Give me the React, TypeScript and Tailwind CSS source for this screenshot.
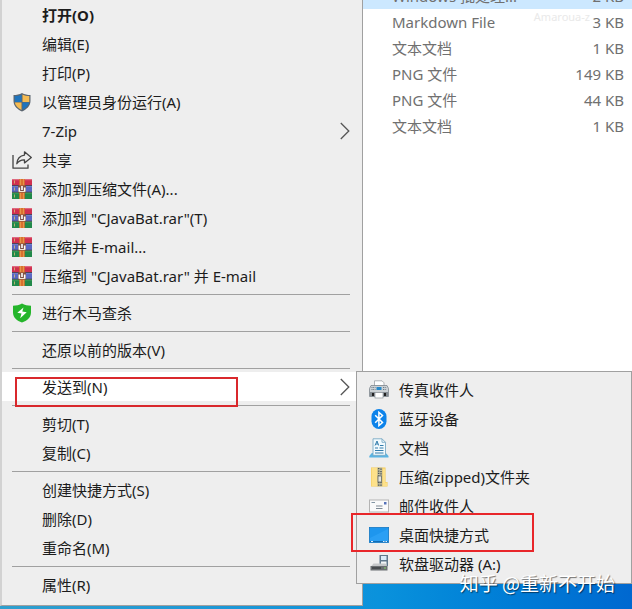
import type { ReactNode } from "react"

type Item = { label: string; icon?: ReactNode; bold?: boolean; arrow?: boolean; submenu?: boolean }

/* 图标 */
function ShieldIcon() {
  return (
    <svg viewBox="0 0 20 20" className="w-5 h-5">
      <path d="M10 1C7.500 2.500 4.500 3 1.500 3v6c0 5 4 8.500 8.500 10.500C14.500 17.500 18.500 14 18.500 9V3C15.500 3 12.500 2.500 10 1z" fill="#5c6670" />
      <path d="M9.500 2.500C7.500 3.600 5 4 2.700 4.100V10h6.800z" fill="#1f74bd" />
      <path d="M10.500 2.500c2 1.100 4.500 1.500 6.800 1.600V10h-6.800z" fill="#f5bb52" />
      <path d="M2.800 10.600h6.700v7.300C6 16.200 3.300 13.800 2.800 10.600z" fill="#f5bb52" />
      <path d="M17.200 10.600h-6.700v7.300c3.500-1.700 6.200-4.100 6.700-7.300z" fill="#1f74bd" />
    </svg>
  )
}

function ShareIcon() {
  return (
    <svg viewBox="0 0 20 20" className="w-5 h-5" fill="none" stroke="#444" strokeWidth="1.300" strokeLinejoin="round">
      <path d="M1 5v13.200h15V14.500" />
      <path d="M12.500 1.800l6.800 5.600-6.800 5.500V9.800c-3.500-.2-5.800 1.200-7.700 3.900.4-4.800 3-8 7.700-8.600z" />
    </svg>
  )
}

function RarIcon() {
  return (
    <svg viewBox="0 0 20 20" className="w-5 h-5">
      <rect y="0" width="20" height="7" fill="#d0304f" />
      <rect y="0" width="20" height="1.200" fill="#df6a80" />
      <rect y="6.600" width="20" height="6.800" fill="#5a67c2" />
      <rect y="6.600" width="20" height="1" fill="#7e8bd5" />
      <rect y="13.400" width="20" height="6.600" fill="#21894a" />
      <rect y="13.400" width="20" height="1" fill="#51ad61" />
      <path d="M0 6.500h20M0 13.200h20" stroke="#403c45" strokeWidth=".8" />
      <path d="M2.500 1.500v3M2.500 8.500v3M2.500 15.500v3" stroke="#d8bf76" strokeWidth=".8" />
      <rect x="7.200" width="5.600" height="20" fill="#d9702f" />
      <path d="M8.500 0v6M11.500 0v6M8.500 14v6M11.500 14v6" stroke="#e8a04f" strokeWidth=".8" />
      <rect x="6" y="6.500" width="8" height="7" fill="#7d5146" />
      <path d="M7.300 12.800V8.500M12.700 12.800V8.500M10 7v4" stroke="#fff" strokeWidth="1.600" />
      <path d="M7 12.500h6" stroke="#f0e6d8" />
    </svg>
  )
}

function GuardIcon() {
  return (
    <svg viewBox="0 0 20 20" className="w-5 h-5">
      <path d="M10 .5C7.500 2 4 2.700 1 2.800v6.700c0 5 4 8.500 9 10 5-1.500 9-5 9-10V2.800C16 2.700 12.500 2 10 .5z" fill="#25b52b" />
      <path d="M11.500 4.500L5.300 9.800l4.200.8-1.300 4.700 6.500-6-4.400-.8z" fill="#fff" />
    </svg>
  )
}

function FaxIcon() {
  return (
    <svg viewBox="0 0 20 20" className="w-5 h-5">
      <path d="M5.500 6V.8h7.500l2 2V6z" fill="#fff" stroke="#9ba0a4" strokeWidth=".8" />
      <path d="M2 5.500h16l1.500 3v8H.5v-8z" fill="#ccd2d6" stroke="#7f878e" strokeWidth=".8" />
      <path d="M1 12h18v4.500H1z" fill="#858c92" />
      <rect x="7.500" y="7" width="5" height="3" fill="#2889c9" />
      <path d="M2.500 7.500h4M2.500 9.500h4M14 7.500h3.500M14 9.500h3.500" stroke="#6d7b86" strokeDasharray="1 .7" />
      <rect x="6" y="12.500" width="8" height="5.500" fill="#fff" stroke="#8d959b" strokeWidth=".7" />
      <path d="M4 13v3M16 13v3" stroke="#222" strokeWidth="2" />
    </svg>
  )
}

function BluetoothIcon() {
  return (
    <svg viewBox="0 0 20 20" className="w-5 h-5">
      <rect x="2.500" width="15" height="20" rx="7.500" fill="#0d83ea" />
      <path d="M6.200 6.300l7.300 7.200-3.600 3.200V3.300l3.600 3.200-7.300 7.200" fill="none" stroke="#fff" strokeWidth="1.500" />
    </svg>
  )
}

function DocumentIcon() {
  return (
    <svg viewBox="0 0 20 20" className="w-5 h-5">
      <path d="M.3 18l2.500-3h14l2.700 3v1.500H.3z" fill="#5bb4e2" />
      <path d="M4 .8h9l3.500 3.500v13H4z" fill="#f2fafe" stroke="#7baac5" strokeWidth=".9" />
      <path d="M13 .8v3.500h3.500" fill="none" stroke="#7baac5" strokeWidth=".9" />
      <path d="M6 7.500l2-4.500 1.700 4.500M7 6h2" fill="none" stroke="#327cac" />
      <path d="M11 7.500h3.500M6 10h3M10.500 10h4M6 12.500h8.500M6 15h8.500" stroke="#327cac" strokeWidth="1.100" />
    </svg>
  )
}

function ZipIcon() {
  return (
    <svg viewBox="0 0 20 20" className="w-5 h-5">
      <path d="M2 .5h14.500V15h2v4.500H2z" fill="#f3c955" />
      <path d="M2.500 1h5.500v18H2.500zM13.500 1.500h2.500V15.500h2V19h-4.500z" fill="#fde18a" />
      <rect x="8.300" y=".5" width="5" height="19" fill="#c5c3a1" />
      <path d="M9.700 1v8M12 1.500v8M9.700 15v4M12 15v4" stroke="#50565a" strokeWidth="1.500" strokeDasharray="1.300 1.100" />
      <rect x="9" y="9" width="3.500" height="6" fill="#e4e4dc" stroke="#656b68" strokeWidth=".8" />
    </svg>
  )
}

function MailIcon() {
  return (
    <svg viewBox="0 0 20 20" className="w-5 h-5">
      <rect x=".5" y="4" width="19" height="12" fill="#fafafa" stroke="#b4b4b4" />
      <path d="M2.500 6.500h3.500" stroke="#8395a4" />
      <rect x="15" y="6" width="2.500" height="2.500" fill="#5672b9" />
      <path d="M7 10h6.500M7 12.500h6.500" stroke="#7e8994" />
    </svg>
  )
}

function DesktopIcon() {
  return (
    <svg viewBox="0 0 20 20" className="w-5 h-5">
      <rect x=".4" y="2.500" width="19.200" height="15" fill="#1e96ee" stroke="#1678c2" strokeWidth=".8" />
      <path d="M1 13L19 4v12H1z" fill="#2a9ff4" />
      <path d="M1 16.500h18" stroke="#116db5" />
      <path d="M2 16.500h2M14 16.500h1.500M16.500 16.500H18" stroke="#d9efff" />
    </svg>
  )
}

function FloppyIcon() {
  return (
    <svg viewBox="0 0 20 20" className="w-5 h-5">
      <path d="M10.500 1H19v11h-8.500z" fill="#60788c" />
      <path d="M12 2h5.500v4H12z" fill="#d8ebf8" />
      <path d="M12 7.500h5.500V11H12z" fill="#f1f5f7" />
      <path d="M4.500 9.500h12l2 3H2z" fill="#c4c6c8" />
      <path d="M1.500 12h17v4.500h-17z" fill="#6b6f72" />
      <path d="M3 14h9" stroke="#34383b" strokeWidth="1.300" />
      <rect x="15" y="13.500" width="2" height="1" fill="#86d56b" />
    </svg>
  )
}

const groups: Item[][] = [
  [
    { label: "打开(O)", bold: true },
    { label: "编辑(E)" },
    { label: "打印(P)" },
    { label: "以管理员身份运行(A)", icon: <ShieldIcon /> },
    { label: "7-Zip", arrow: true },
    { label: "共享", icon: <ShareIcon /> },
    { label: "添加到压缩文件(A)...", icon: <RarIcon /> },
    { label: '添加到 "CJavaBat.rar"(T)', icon: <RarIcon /> },
    { label: "压缩并 E-mail...", icon: <RarIcon /> },
    { label: '压缩到 "CJavaBat.rar" 并 E-mail', icon: <RarIcon /> },
  ],
  [{ label: "进行木马查杀", icon: <GuardIcon /> }],
  [{ label: "还原以前的版本(V)" }],
  [{ label: "发送到(N)", arrow: true, submenu: true }],
  [{ label: "剪切(T)" }, { label: "复制(C)" }],
  [{ label: "创建快捷方式(S)" }, { label: "删除(D)" }, { label: "重命名(M)" }],
  [{ label: "属性(R)" }],
]

const sendTo = [
  { label: "传真收件人", icon: <FaxIcon /> },
  { label: "蓝牙设备", icon: <BluetoothIcon /> },
  { label: "文档", icon: <DocumentIcon /> },
  { label: "压缩(zipped)文件夹", icon: <ZipIcon /> },
  { label: "邮件收件人", icon: <MailIcon /> },
  { label: "桌面快捷方式", icon: <DesktopIcon />, marked: true },
  { label: "软盘驱动器 (A:)", icon: <FloppyIcon /> },
]

const files = [
  { type: "Windows 批处理...", size: "2 KB", selected: true },
  { type: "Markdown File", size: "3 KB" },
  { type: "文本文档", size: "1 KB" },
  { type: "PNG 文件", size: "149 KB" },
  { type: "PNG 文件", size: "44 KB" },
  { type: "文本文档", size: "1 KB" },
]

function SendToMenu() {
  return (
    <ul className="absolute left-[354px] -top-px z-10 w-[276px] border border-[#a0a0a0] bg-[#eeeeee] pb-[5px] pt-[3px]">
      {sendTo.map((item) => (
        <li key={item.label} className="relative">
          <button className="flex h-[29px] w-full items-center gap-[10px] pl-3 text-left whitespace-nowrap">
            {item.icon}
            {item.label}
          </button>
          {item.marked && (
            <span className="pointer-events-none absolute -left-[6px] -top-[7px] h-[39px] w-[183px] border-2 border-[#e8262a]" />
          )}
        </li>
      ))}
    </ul>
  )
}

function MenuRow({ item }: { item: Item }) {
  return (
    <li className={item.submenu ? "relative bg-white" : "relative"}>
      <button className="flex h-[29px] w-full items-center gap-[10px] pl-[10px] pr-3 text-left whitespace-nowrap">
        <span className="h-5 w-5 shrink-0">{item.icon}</span>
        <span className={item.bold ? "grow font-bold" : "grow"}>{item.label}</span>
        {item.arrow && (
          <svg viewBox="0 0 10 18" className="h-[18px] w-[10px]" fill="none" stroke="#555" strokeWidth="1.300">
            <path d="M.8 1l8 8-8 8" />
          </svg>
        )}
      </button>
      {item.submenu && (
        <>
          <span className="pointer-events-none absolute left-[13px] top-[5px] h-[30px] w-[223px] border-2 border-[#d9282c]" />
          <SendToMenu />
        </>
      )}
    </li>
  )
}

export default function App() {
  return (
    <div className="relative flex min-h-screen items-start overflow-hidden bg-linear-to-r from-[#2f9fce] via-[#0a92dc] via-60% to-[#0068d0] font-['Noto_Sans','Noto_Sans_CJK_SC',sans-serif] text-[15px] leading-5 text-[#1c1c1c]">
      {/* 右键菜单 */}
      <nav className="relative z-10 w-[363px] shrink-0 border-b border-l-2 border-r border-b-[#a0a0a0] border-l-[#d2d2d2] border-r-[#a0a0a0] bg-[#eeeeee] pb-[6px]">
        {groups.map((group, index) => (
          <div key={index}>
            {index > 0 && (
              <div className="flex h-2 items-center pl-[10px] pr-3">
                <hr className="grow border-[#a0a0a0]" />
              </div>
            )}
            <ul>
              {group.map((item) => (
                <MenuRow key={item.label} item={item} />
              ))}
            </ul>
          </div>
        ))}
      </nav>

      {/* 文件列表 */}
      <main className="h-[580px] min-w-0 grow overflow-hidden bg-white">
        <table className="-mt-[17px] w-full text-[#707070]">
          <tbody>
            {files.map((file, index) => (
              <tr key={index} className={file.selected ? "h-[26px] bg-[#cce8ff]" : "h-[26px]"}>
                <td className="p-0 pl-[29px]">{file.type}</td>
                <td className="p-0 pr-2 text-right">{file.size}</td>
              </tr>
            ))}
          </tbody>
        </table>
      </main>

      {/* 水印 */}
      <span className="absolute right-[42px] top-[7px] text-[11px] text-[#e9e9e9]">Amaroua-z</span>
      <p className="absolute bottom-3 right-[17px] z-20 font-['Noto_Sans_CJK_SC',sans-serif] text-[19px] leading-7 text-white [text-shadow:1px_1px_1px_#00000088]">
        知乎 @重新不开始
      </p>
    </div>
  )
}
